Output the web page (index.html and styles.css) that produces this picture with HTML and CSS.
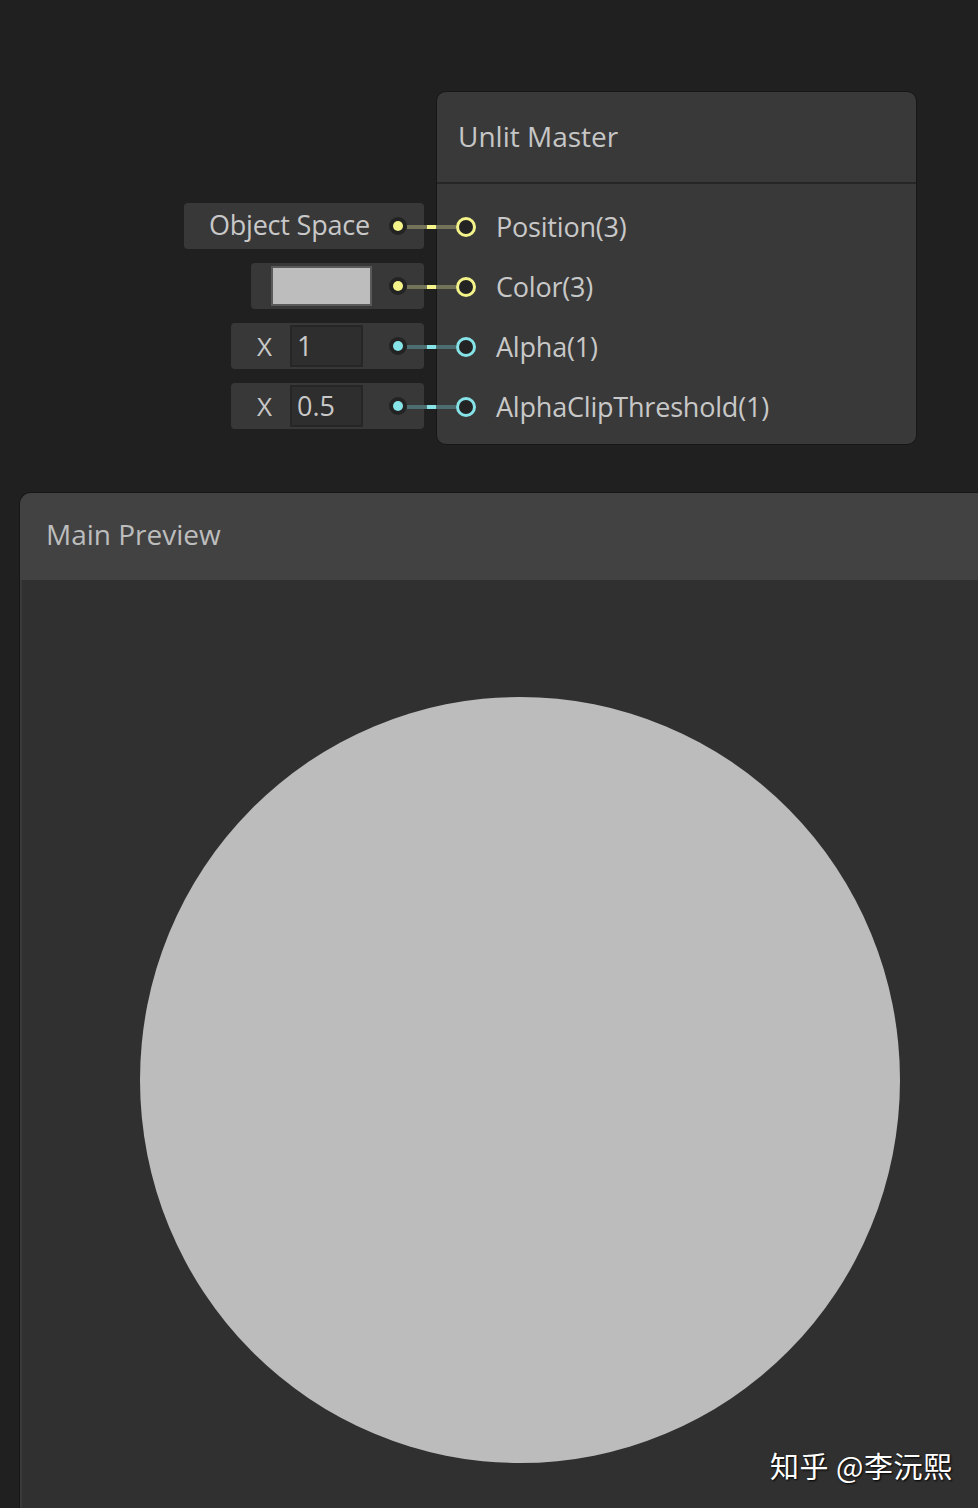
FILE: index.html
```html
<!DOCTYPE html>
<html lang="en">
<head>
    <meta charset="UTF-8">
    <meta name="viewport" content="width=device-width, initial-scale=1.0">
    <title>Shader Graph</title>
    <link rel="stylesheet" href="styles.css">
</head>
<body>
    <div class="graph">
        <div class="inputs">
            <div class="input-box space-input">
                <span class="input-label">Object Space</span>
                <span class="out-dot vec3"></span>
            </div>
            <div class="input-box color-input">
                <span class="swatch"></span>
                <span class="out-dot vec3"></span>
            </div>
            <div class="input-box">
                <span class="axis">X</span>
                <span class="field">1</span>
                <span class="out-dot float"></span>
            </div>
            <div class="input-box">
                <span class="axis">X</span>
                <span class="field">0.5</span>
                <span class="out-dot float"></span>
            </div>
        </div>

        <div class="node">
            <div class="node-title">Unlit Master</div>
            <div class="node-body">
                <div class="port-row">
                    <span class="port vec3"></span>
                    <span class="port-name">Position(3)</span>
                </div>
                <div class="port-row">
                    <span class="port vec3"></span>
                    <span class="port-name">Color(3)</span>
                </div>
                <div class="port-row">
                    <span class="port float"></span>
                    <span class="port-name">Alpha(1)</span>
                </div>
                <div class="port-row">
                    <span class="port float"></span>
                    <span class="port-name">AlphaClipThreshold(1)</span>
                </div>
            </div>
        </div>
    </div>

    <div class="preview">
        <div class="preview-title">Main Preview</div>
        <div class="preview-body">
            <div class="sphere"></div>
            <div class="watermark">知乎 @李沅熙</div>
        </div>
    </div>
</body>
</html>
```

FILE: styles.css
```css
body {
    background-color: #202020;
    font-family: 'Open Sans', 'Noto Sans', sans-serif;
    margin: 0;
    height: 1508px;
    overflow: hidden;
}
.graph {
    display: flex;
    padding: 91px 0 0 184px;
}
.inputs {
    width: 240px;
    margin-right: 12px;
    padding-top: 112px;
    display: flex;
    flex-direction: column;
    align-items: flex-end;
    gap: 14px;
}
.input-box {
    height: 46px;
    box-sizing: border-box;
    background-color: #383838;
    border-radius: 4px;
    display: flex;
    align-items: center;
    padding-right: 21px;
    color: #c8c8c8;
    font-size: 26px;
}
.space-input {
    width: 240px;
    justify-content: flex-end;
}
.input-label {
    margin-right: 23px;
    font-size: 27px;
    letter-spacing: -0.2px;
    position: relative;
    top: -2px;
}
.color-input {
    width: 173px;
    padding-left: 20px;
}
.swatch {
    width: 101px;
    height: 40px;
    box-sizing: border-box;
    background-color: #bdbdbd;
    border: 2px solid #5a5a5a;
    margin-right: 21px;
}
.input-box .axis {
    width: 59px;
    padding-left: 8px;
    box-sizing: border-box;
    text-align: center;
    font-size: 26px;
}
.field {
    width: 73px;
    height: 42px;
    box-sizing: border-box;
    background-color: #2e2e2e;
    border: 2px solid #262626;
    padding-left: 5px;
    line-height: 38px;
    font-size: 27px;
    margin-right: 30px;
}
.out-dot {
    width: 10px;
    height: 10px;
    border-radius: 50%;
    box-shadow: 0 0 0 4px #232323;
}
.out-dot.vec3 {
    background-color: #f4f48a;
}
.out-dot.float {
    background-color: #86e4e8;
}

.node {
    width: 481px;
    height: 354px;
    box-sizing: border-box;
    background-color: #393939;
    border: 1px solid #171717;
    border-radius: 10px;
}
.node-title {
    height: 90px;
    border-bottom: 2px solid #262626;
    padding-left: 21px;
    line-height: 88px;
    font-size: 28px;
    color: #c6c6c6;
}
.node-body {
    padding-top: 13px;
}
.port-row {
    height: 60px;
    display: flex;
    align-items: center;
    color: #c8c8c8;
    font-size: 27px;
}
.port {
    position: relative;
    width: 20px;
    height: 20px;
    box-sizing: border-box;
    border-radius: 50%;
    border: 3px solid;
    background-color: #232323;
    margin: 0 20px 0 19px;
}
.port.vec3 {
    border-color: #f4f48a;
}
.port.float {
    border-color: #86e4e8;
}
/* wire between the inline input and the port */
.port::before {
    content: '';
    position: absolute;
    left: -52px;
    top: 5px;
    width: 49px;
    height: 4px;
}
.port.vec3::before {
    background: linear-gradient(90deg, #73735a 20px, #f4f48a 20px, #f4f48a 29px, #73735a 29px);
}
.port.float::before {
    background: linear-gradient(90deg, #4c6e70 20px, #86e4e8 20px, #86e4e8 29px, #4c6e70 29px);
}
.port-name {
    letter-spacing: -0.2px;
    position: relative;
    top: -1px;
}

.preview {
    margin: 47px 0 0 19px;
    width: 980px;
    border: 1px solid #171717;
    border-right: none;
    border-radius: 12px 0 0 0;
    overflow: hidden;
}
.preview-title {
    height: 87px;
    background-color: #424242;
    padding-left: 26px;
    line-height: 82px;
    font-size: 28px;
    color: #bdbdbd;
}
.preview-body {
    position: relative;
    height: 928px;
    background-color: #303030;
    border-left: 2px solid #3a3a3a;
    padding: 117px 0 0 118px;
    box-sizing: border-box;
}
.sphere {
    width: 760px;
    height: 766px;
    border-radius: 50%;
    background-color: #bcbcbc;
}
.watermark {
    position: absolute;
    left: 748px;
    top: 864px;
    font-family: 'Noto Sans CJK SC', sans-serif;
    font-size: 29px;
    letter-spacing: 0.5px;
    color: #ffffff;
    text-shadow: 1px 1px 2px #000000;
}
```
